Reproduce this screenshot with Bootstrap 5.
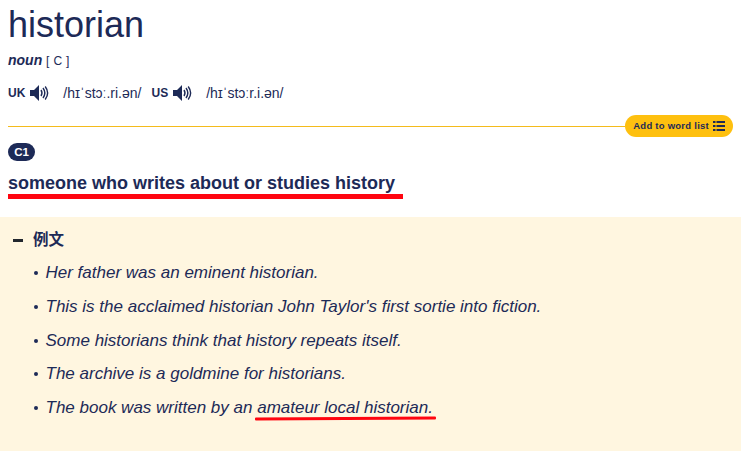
<!DOCTYPE html>
<html lang="en"><head><meta charset="utf-8"><title>historian</title>
<link href="https://cdn.jsdelivr.net/npm/bootstrap@5.3.0/dist/css/bootstrap.min.css" rel="stylesheet">
<style>
html,body{height:451px;overflow:hidden;background:#fff}
body{font-family:"Liberation Sans",Arial,sans-serif;color:#1d2a57;margin:0}
.entry-head{padding:0 8px}
.hw{font-size:36px;line-height:44px;height:45px;margin:3px 0 0;font-weight:400;letter-spacing:0}
.posline{font-size:14px;line-height:18px;margin-top:3px}
.posline b{font-style:italic}
.posline span{font-size:12px;letter-spacing:.3px}
.pron{margin-top:13px;height:20px;font-size:14px;line-height:20px}
.pron b{font-size:12px}
.spk{display:block;margin:0 0 0 5px}
.ipa1{margin-left:14px}
.ipa2{margin-left:14px}
.usl{margin-left:10px}
.sep{height:24px;margin-top:11px}
.sep i{display:block;height:1px;background:#f4bb1c;flex:1}
.addbtn{background:#fec00f;color:#1d2a57;border-radius:12px;font-size:9.5px;font-weight:700;height:22px;padding:0 8px;letter-spacing:.25px;white-space:nowrap}
.lvl{background:#1d2a57;color:#fff;font-size:11.5px;font-weight:700;border-radius:9px;width:27px;height:18px;line-height:18px;text-align:center;margin-top:5px}
.defn{font-size:18px;font-weight:700;line-height:22px;margin-top:11px;height:45px;position:relative}
.redline{position:absolute;background:#ff0510}
.r1{left:0;top:22px;width:395px;height:4.500px}
.egs{background:#fff6e0;height:234px;padding-top:12px}
.egs-h{font-family:"Liberation Sans","Noto Sans CJK SC",sans-serif;font-size:15.500px;font-weight:700;line-height:22px;padding-left:13px}
.minus{display:block;width:10px;height:3px;background:#22272e;margin-right:10px}
.eglist{list-style:none;margin:0;padding:0 0 0 33.500px}
.eglist li{font-size:17px;font-style:italic;line-height:24px;margin-top:9.750px;display:flex;align-items:center}
.eglist li::before{content:"";width:4px;height:4px;border-radius:50%;background:#1d2a57;margin-right:8px;flex:none}
.eglist li:first-child{margin-top:10px}
.mk{position:relative}
.r2{left:-2px;top:19px;width:181px;height:2.500px;border-radius:1px;transform:rotate(-.3deg)}
</style></head><body>
<div class="entry-head">
<h1 class="hw">historian</h1>
<div class="posline"><b>noun</b> <span>[ C ]</span></div>
<div class="pron d-flex align-items-center">
<b>UK</b>
<svg class="spk" width="19" height="18" viewBox="0 0 19 18"><path d="M0 6h4l5-5v16l-5-5H0z" fill="#1d2a57"/><g fill="none" stroke="#1d2a57" stroke-width="1.4"><path d="M11 6c1.200 1.800 1.200 4.200 0 6"/><path d="M13 4c2.200 3 2.200 7 0 10"/><path d="M15.200 2.500c3 4 3 9 0 13"/></g></svg>
<span class="ipa1">/hɪˈstɔː.ri.ən/</span>
<b class="usl">US</b>
<svg class="spk" width="19" height="18" viewBox="0 0 19 18"><path d="M0 6h4l5-5v16l-5-5H0z" fill="#1d2a57"/><g fill="none" stroke="#1d2a57" stroke-width="1.4"><path d="M11 6c1.200 1.800 1.200 4.200 0 6"/><path d="M13 4c2.200 3 2.200 7 0 10"/><path d="M15.200 2.500c3 4 3 9 0 13"/></g></svg>
<span class="ipa2">/hɪˈstɔːr.i.ən/</span>
</div>
<div class="sep d-flex align-items-center"><i></i><div class="addbtn d-flex align-items-center gap-1">Add to word list
<svg width="12" height="10" viewBox="0 0 12 10"><g fill="#1d2a57"><rect x="0" y="0" width="2.500" height="2"/><rect x="3.500" y="0" width="8.500" height="2"/><rect x="0" y="4" width="2.500" height="2"/><rect x="3.500" y="4" width="8.500" height="2"/><rect x="0" y="8" width="2.500" height="2"/><rect x="3.500" y="8" width="8.500" height="2"/></g></svg></div></div>
<div class="lvl">C1</div>
<div class="defn">someone who writes about or studies history<div class="redline r1"></div></div>
</div>
<section class="egs">
<div class="egs-h d-flex align-items-center"><span class="minus"></span>例文</div>
<ul class="eglist">
<li>Her father was an eminent historian.</li>
<li>This is the acclaimed historian John Taylor's first sortie into fiction.</li>
<li>Some historians think that history repeats itself.</li>
<li>The archive is a goldmine for historians.</li>
<li><span>The book was written by an <span class="mk">amateur local historian.<span class="redline r2"></span></span></span></li>
</ul>
</section>
<script src="https://cdn.jsdelivr.net/npm/bootstrap@5.3.0/dist/js/bootstrap.bundle.min.js"></script>
</body></html>
